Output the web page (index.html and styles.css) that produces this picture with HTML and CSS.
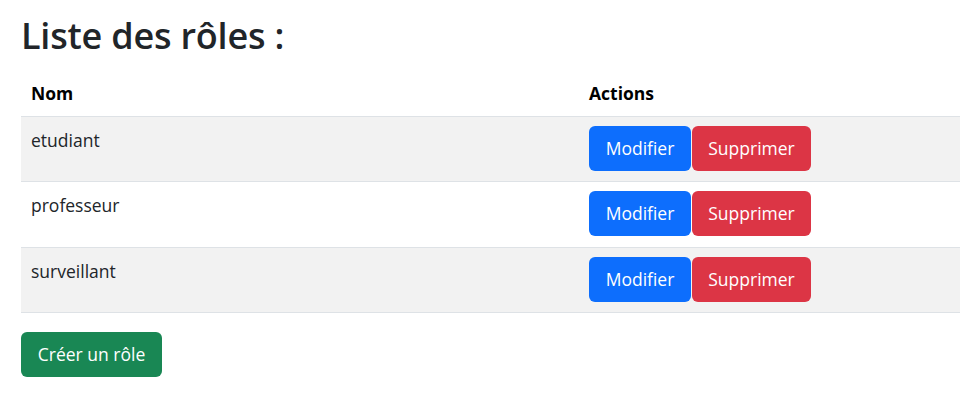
FILE: index.html
```html
<!DOCTYPE html>
<html lang="fr">
<head>
<meta charset="utf-8">
<title>Liste des rôles</title>
<link rel="stylesheet" href="styles.css">
</head>
<body>
<main class="page">
  <h1 class="title">Liste des rôles :</h1>
  <table class="roles">
    <thead>
      <tr><th class="col-name">Nom</th><th>Actions</th></tr>
    </thead>
    <tbody>
      <tr class="striped">
        <td class="name">etudiant</td>
        <td><div class="actions"><a class="btn btn-primary">Modifier</a><a class="btn btn-danger">Supprimer</a></div></td>
      </tr>
      <tr>
        <td class="name">professeur</td>
        <td><div class="actions"><a class="btn btn-primary">Modifier</a><a class="btn btn-danger">Supprimer</a></div></td>
      </tr>
      <tr class="striped">
        <td class="name">surveillant</td>
        <td><div class="actions"><a class="btn btn-primary">Modifier</a><a class="btn btn-danger">Supprimer</a></div></td>
      </tr>
    </tbody>
  </table>
  <a class="btn btn-success">Créer un rôle</a>
</main>
</body>
</html>
```
FILE: styles.css
```css
html, body {
  margin: 0;
  padding: 0;
  background: #fff;
}
body {
  font-family: "Open Sans", "Noto Sans", sans-serif;
  color: #212529;
  font-size: 17.5px;
}
.page {
  padding: 12px 0 0 21px;
}
.title {
  font-size: 36px;
  font-weight: 600;
  line-height: 48px;
  margin: 0 0 12px 0;
  color: #212529;
  letter-spacing: -0.2px;
}
.roles {
  width: 100%;
  border-collapse: collapse;
  margin-bottom: 19px;
}
.roles th {
  text-align: left;
  font-weight: 700;
  color: #000;
  padding: 8px 10px 10px 10px;
  line-height: 26px;
  border-bottom: 1px solid #dee2e6;
}
.roles th.col-name {
  width: 538px;
}
.roles td {
  vertical-align: top;
  padding: 9px 10px 10.4px 10px;
  line-height: 26px;
  border-bottom: 1px solid #dee2e6;
}
.roles td.name {
  line-height: 29px;
}
.roles tr.striped td {
  background: #f2f2f2;
}
.actions {
  display: flex;
  gap: 1px;
}
.btn {
  display: inline-flex;
  align-items: center;
  justify-content: center;
  box-sizing: border-box;
  height: 45px;
  padding: 0 15px;
  border-radius: 6px;
  color: #fff;
  font-size: 17.5px;
  text-decoration: none;
  line-height: 1;
}
.btn-primary { background: #0d6efd; width: 102px; }
.btn-danger { background: #dc3545; width: 119px; }
.btn-success { background: #198754; width: 141px; }
```
